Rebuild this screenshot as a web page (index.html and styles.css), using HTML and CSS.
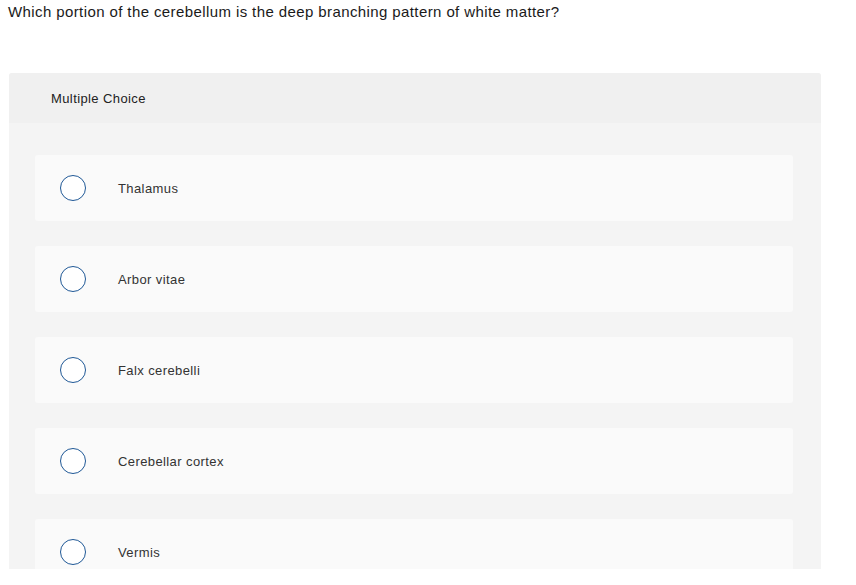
FILE: index.html
```html
<!DOCTYPE html>
<html>
<head>
<meta charset="utf-8">
<link rel="stylesheet" href="styles.css">
</head>
<body>
<p class="question">Which portion of the cerebellum is the deep branching pattern of white matter?</p>
<div class="card">
  <div class="card-head">Multiple Choice</div>
  <div class="card-body">
    <div class="option"><span class="radio"></span><span class="label">Thalamus</span></div>
    <div class="option"><span class="radio"></span><span class="label">Arbor vitae</span></div>
    <div class="option"><span class="radio"></span><span class="label">Falx cerebelli</span></div>
    <div class="option"><span class="radio"></span><span class="label">Cerebellar cortex</span></div>
    <div class="option"><span class="radio"></span><span class="label">Vermis</span></div>
  </div>
</div>
</body>
</html>
```
FILE: styles.css
```css
html, body { margin: 0; padding: 0; background: #fff; }
body {
  font-family: "Liberation Sans", Arial, sans-serif;
  color: #1f1f1f;
  letter-spacing: 0.4px;
}
.question {
  margin: 0;
  padding: 3px 0 0 8px;
  font-size: 15px;
  line-height: 18px;
  color: #1a1a1a;
}
.card {
  margin: 52px 0 0 9px;
  width: 812px;
  height: 496px;
  overflow: hidden;
  background: #f4f4f4;
  border-radius: 3px 3px 0 0;
}
.card-head {
  height: 50px;
  background: #f0f0f0;
  display: flex;
  align-items: center;
  padding-left: 42px;
  font-size: 13px;
  color: #222;
}
.card-body {
  padding: 32px 28px 0 26px;
  display: flex;
  flex-direction: column;
  gap: 25px;
}
.option {
  flex: none;
  height: 66px;
  background: #fafafa;
  border-radius: 3px;
  display: flex;
  align-items: center;
  padding-left: 25px;
}
.radio {
  width: 24px;
  height: 24px;
  border: 1.5px solid #1f5896;
  border-radius: 50%;
  background: #fff;
  flex: none;
}
.label {
  margin-left: 32px;
  font-size: 13px;
  color: #333;
}
```
